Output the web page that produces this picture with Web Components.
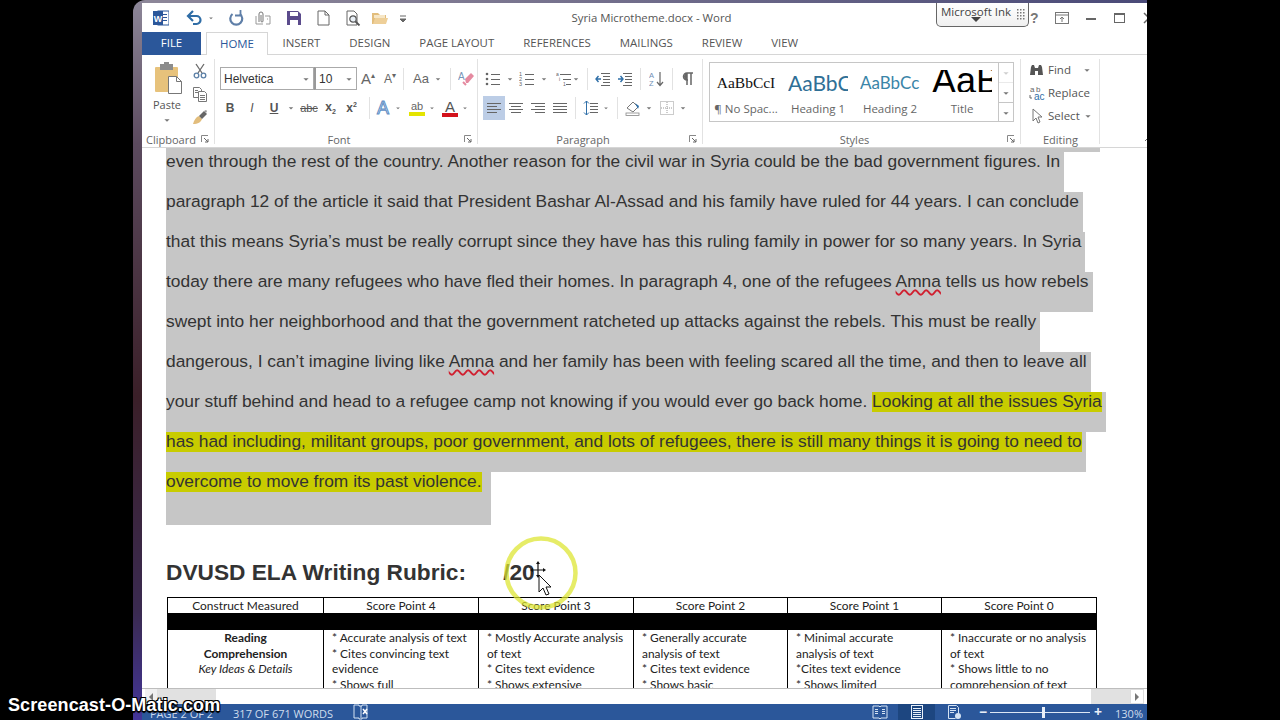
<!DOCTYPE html>
<html lang="en">
<head>
<meta charset="utf-8">
<title>Syria Microtheme.docx - Word</title>
<style>
  html, body { margin: 0; background: #000; }
</style>
</head>
<body>
<desk-screen></desk-screen>
<script>
(function () {
    "use strict";

    // Icons for the toolbar buttons, all on a 16x16 box unless the svg says otherwise.
    function svg(body, w, h) {
        w = w || 16; h = h || 16;
        return `<svg xmlns="http://www.w3.org/2000/svg" width="${w}" height="${h}" viewBox="0 0 ${w} ${h}" style="display:block">${body}</svg>`;
    }
    var BLUE = '#2f6fa8';
    function lines(rows) {
        return rows.map(function (r) { return `<path d="M${r[0]} ${r[1]+.5}H${r[2]}" stroke="${r[3] || '#666'}"/>`; }).join('');
    }
    var ICONS = {
        caret: svg('<path d="M5 7h6l-3 3z" fill="#777"/>', 16, 16),
        word: svg('<rect x="5" y="1" width="11" height="14" fill="#fff" stroke="#2b579a"/><path d="M9 4.500h5M9 7.500h5M9 10.500h5" stroke="#2b579a"/><rect x="0" y="1" width="10" height="14" fill="#2b579a"/><text x="5" y="12" font-family="Liberation Sans" font-size="9" font-weight="bold" fill="#fff" text-anchor="middle">W</text>'),
        undo: svg('<path d="M3 6h7.500a3.500 3.500 0 0 1 0 8H7" fill="none" stroke="#2f6da6" stroke-width="2.200"/><path d="M7 1L2 6l5 5" fill="none" stroke="#2f6da6" stroke-width="2.200"/>'),
        redo: svg('<path d="M4.500 4a6 6 0 1 0 7.500 0" fill="none" stroke="#5f7fa8" stroke-width="2.200"/><path d="M12.500 0v5.500H7" fill="none" stroke="#5f7fa8" stroke-width="1.800"/>'),
        touch: svg('<path d="M4 12V4a2 2 0 0 1 4 0v7a1 1 0 0 1-2 0V5" fill="none" stroke="#777"/><path d="M1 6v8h7M10 6h5v8h-4M12 9h1" fill="none" stroke="#999"/>'),
        save: svg('<path d="M1 1h11l3 3v11H1z" fill="#5b4b8c"/><rect x="4" y="2" width="8" height="4" fill="#fff"/><rect x="4" y="10" width="8" height="5" fill="#fff"/>'),
        page: svg('<path d="M3 1h7l4 4v10H3z" fill="#fff" stroke="#666"/><path d="M10 1v4h4" fill="none" stroke="#666"/>'),
        preview: svg('<path d="M2 1h7l3 3v11H2z" fill="#fff" stroke="#666"/><circle cx="8" cy="9" r="3.200" fill="#e9f0f7" stroke="#555" stroke-width="1.200"/><path d="M10.500 11.500l4 4" stroke="#555" stroke-width="1.800"/>'),
        open: svg('<path d="M0 3h6l2 2h6v9H0z" fill="#e2bd7c"/><path d="M2 5h11v3H2z" fill="#f6e6c6"/><path d="M1 14l2-6h13l-2 6z" fill="#eecf98"/>'),
        custom: svg('<path d="M5 6h6M5 9l3 3 3-3z" stroke="#666" fill="#666"/>'),
        paste: svg('<rect x="1" y="5" width="23" height="25" rx="1" fill="#e7c27b"/><rect x="6" y="2" width="13" height="6" fill="#8c8c8c"/><rect x="10" y="0" width="5" height="3" fill="#8c8c8c"/><path d="M14.500 14.500h8l5 5v12h-13z" fill="#fff" stroke="#777"/><path d="M22.500 14.500v5h5" fill="none" stroke="#777"/>', 28, 32),
        cut: svg('<path d="M4 1l6 9M12 1L6 10" stroke="#6a6a6a" stroke-width="1.300" fill="none"/><circle cx="4.500" cy="12.500" r="2.300" fill="none" stroke="#5b7fa6" stroke-width="1.300"/><circle cx="11.500" cy="12.500" r="2.300" fill="none" stroke="#5b7fa6" stroke-width="1.300"/>'),
        copy: svg('<path d="M1.500 1.500h6l2 2v8h-8z" fill="#fff" stroke="#777"/><path d="M6.500 5.500h6l2 2v8h-8z" fill="#fff" stroke="#777"/><path d="M8 9.500h5M8 11.500h5M8 13.500h5M3 4.500h3M3 6.500h3" stroke="#777"/>'),
        painter: svg('<path d="M1 15c1-4 3-7 6-8l3 3c-1 3-4 5-9 5z" fill="#e2bd7c"/><path d="M7 7l3 3 5-5-3-3z" fill="#666"/><path d="M12 2l2-1 1 1-1 2z" fill="#999"/>'),
        clear: svg('<path d="M7 8l6-6 3 3-6 7H8z" fill="#e58aa0"/><text x="0" y="9" font-family="Liberation Sans" font-size="10" fill="#7a96b8">A</text><path d="M5 11l3 3" stroke="#e58aa0" stroke-width="2"/>'),
        bullets: svg(`<g fill="#666"><circle cx="2" cy="3" r="1.300"/><circle cx="2" cy="8" r="1.300"/><circle cx="2" cy="13" r="1.300"/></g>` + lines([[6,3,15],[6,8,15],[6,13,15]])),
        numbers: svg(`<g font-family="Liberation Sans" font-size="5.500" fill="#666"><text x="0" y="5">1</text><text x="0" y="10">2</text><text x="0" y="15">3</text></g>` + lines([[6,3,15],[6,8,15],[6,13,15]])),
        multi: svg(`<g font-family="Liberation Sans" font-size="5" fill="#666"><text x="0" y="5">a</text><text x="3" y="10">i</text><text x="7" y="15">1</text></g>` + lines([[4,3,15],[7,8,15],[10,13,15]])),
        outdent: svg(lines([[6,2,15],[8,5,15],[8,8,15],[8,11,15],[6,14,15]]) + `<path d="M6 8H1M3.500 5L1 8l2.500 3" fill="none" stroke="${BLUE}" stroke-width="1.400"/>`),
        indent: svg(lines([[6,2,15],[8,5,15],[8,8,15],[8,11,15],[6,14,15]]) + `<path d="M1 8h5M3.500 5L6 8l-2.500 3" fill="none" stroke="${BLUE}" stroke-width="1.400"/>`),
        sort: svg(`<g font-family="Liberation Sans" font-size="7.500" fill="#6f8fb5"><text x="0" y="7">A</text><text x="0" y="15">Z</text></g><path d="M11 1v13M8 11l3 3.500 3-3.500" fill="none" stroke="#666" stroke-width="1.200"/>`),
        pilcrow: svg('<path d="M7 14V2M11 14V2M13 2H7a3.200 3.200 0 0 0 0 7h1" fill="none" stroke="#666" stroke-width="1.500"/><path d="M7 2.500a3 3 0 0 0 0 6z" fill="#666"/>'),
        left: svg(lines([[1,3,15],[1,6,11],[1,9,15],[1,12,11]])),
        center: svg(lines([[1,3,15],[3,6,13],[1,9,15],[3,12,13]])),
        right: svg(lines([[1,3,15],[5,6,15],[1,9,15],[5,12,15]])),
        justify: svg(lines([[1,3,15],[1,6,15],[1,9,15],[1,12,15]])),
        spacing: svg(lines([[7,3,15],[7,6,15],[7,9,15],[7,12,15]]) + `<path d="M3.500 1v14M1 3.500L3.500 1 6 3.500M1 12.500L3.500 15 6 12.500" fill="none" stroke="${BLUE}"/>`),
        shading: svg(`<path d="M2 8l6-6 5 5-5 5z" fill="#fff" stroke="#777"/><path d="M10 3l4 3-1 3z" fill="${BLUE}"/><rect x="1" y="13" width="13" height="2.500" fill="#fff" stroke="#888" stroke-width=".8"/>`),
        borders: svg('<rect x="1.500" y="1.500" width="13" height="13" fill="none" stroke="#999" stroke-dasharray="1 1"/><path d="M8 2v12M2 8h12" stroke="#999" stroke-dasharray="1 1"/>'),
        launcher: svg('<path d="M1.500 8V1.500H8" fill="none" stroke="#888"/><path d="M4 4l4 4M8 5v3H5" fill="none" stroke="#666"/>', 10, 10),
        binoc: svg('<path d="M1 13l1-8 1-2h2l1 3v7zM9 13V6l1-3h2l1 2 1 8z" fill="#555"/><rect x="6" y="6" width="3" height="3" fill="#555"/>'),
        replace: svg(`<text x="1" y="7" font-family="Liberation Sans" font-size="8" fill="#666">a</text><text x="7" y="7" font-family="Liberation Sans" font-size="8" fill="#666">b</text><text x="5" y="15" font-family="Liberation Sans" font-size="10" fill="${BLUE}">ac</text><path d="M1 10v3h2" fill="none" stroke="#666"/>`),
        select: svg('<path d="M4 1v12l3-3 2 5 2-1-2-5h4z" fill="#fff" stroke="#777"/>'),
        ribbonopts: svg('<rect x="1.500" y="2.500" width="13" height="11" fill="none" stroke="#777"/><path d="M2 5h12" stroke="#777"/><path d="M8 12V7M6 9l2-2 2 2" fill="none" stroke="#777"/>'),
        min: svg('<path d="M3 9h10" stroke="#666" stroke-width="2"/>'),
        max: svg('<rect x="2.500" y="3.500" width="10" height="9" fill="none" stroke="#666"/><path d="M2 4h11" stroke="#666" stroke-width="2"/>'),
        close: svg('<path d="M3 3l10 10M13 3L3 13" stroke="#666" stroke-width="1.500"/>'),
        collapse: svg('<path d="M1 6l4-4 4 4" fill="none" stroke="#666"/>', 10, 8),
        grip: svg('<g fill="#777"><path d="M0 0h1.500v1.500H0zM3 0h1.500v1.500H3zM6 0h1.500v1.500H6zM0 3h1.500v1.500H0zM3 3h1.500v1.500H3zM6 3h1.500v1.500H6zM0 6h1.500v1.500H0zM3 6h1.500v1.500H3zM6 6h1.500v1.500H6zM0 9h1.500v1.500H0zM3 9h1.500v1.500H3zM6 9h1.500v1.500H6z"/></g>', 8, 11),
        proof: svg('<path d="M1 1h5v1H9V1h5v13H9v1H6v-1H1z" fill="none" stroke="#d5e3f3"/><path d="M8 2v12" stroke="#d5e3f3"/><path d="M10 5l4 5M14 5l-4 5" stroke="#fff" stroke-width="1.500"/>'),
        readmode: svg('<path d="M1 2h6l1 1 1-1h6v12H9l-1 1-1-1H1z" fill="none" stroke="#d5e3f3"/>' + lines([[3,5,6,'#d5e3f3'],[3,7,6,'#d5e3f3'],[3,9,6,'#d5e3f3'],[10,5,13,'#d5e3f3'],[10,7,13,'#d5e3f3'],[10,9,13,'#d5e3f3']])),
        printmode: svg('<rect x="2.500" y="1.500" width="11" height="13" fill="none" stroke="#eaf1f9"/>' + lines([[4,4,12,'#eaf1f9'],[4,6,12,'#eaf1f9'],[4,8,12,'#eaf1f9'],[4,10,12,'#eaf1f9'],[4,12,12,'#eaf1f9']])),
        webmode: svg('<path d="M2.500 1.500h8l2 2v6M2.500 1.500v13h7" fill="none" stroke="#d5e3f3"/>' + lines([[4,4,10,'#d5e3f3'],[4,6,10,'#d5e3f3'],[4,8,8,'#d5e3f3']]) + '<circle cx="12" cy="12" r="3" fill="#d5e3f3"/>')
    };

    function shadow(el, html) {
        if (!el.shadowRoot) {
            el.attachShadow({ mode: 'open' });
        }
        el.shadowRoot.innerHTML = html;
    }

    // One toolbar button. w is the slot width in the row, icon picks from ICONS,
    // text buttons (B, I, U...) pass their label through the slot.
    class ToolBtn extends HTMLElement {
        connectedCallback() {
            var w = this.getAttribute('w') || 22;
            var icon = ICONS[this.getAttribute('icon')] || '<slot></slot>';
            shadow(this, `<style>
                :host { display: flex; flex: 0 0 auto; align-items: center; justify-content: center;
                    width: ${w}px; height: 24px; color: #555; font: 12px "Liberation Sans", sans-serif; }
                :host([active]) { background: #bccde6; }
            </style>${icon}`);
        }
    }
    customElements.define('tool-btn', ToolBtn);

    class TitleBar extends HTMLElement {
        connectedCallback() {
            shadow(this, `<style>
                :host { display: flex; align-items: center; height: 29px; background: #fff; color: #555;
                    font: 11.400px "Open Sans", sans-serif; }
                .qat { display: flex; align-items: center; width: 429px; box-sizing: border-box; padding-left: 9px; flex: none; }
                .title { flex: none; width: 161px; text-align: center; white-space: nowrap; color: #555; }
                .win { margin-left: auto; display: flex; align-items: center; }
                .help { font: bold 14px "Liberation Sans", sans-serif; color: #777; width: 14px; }
            </style>
            <div class="qat">
                <tool-btn icon="word" w="20"></tool-btn>
                <tool-btn icon="undo" w="24" style="margin-left:11px"></tool-btn>
                <tool-btn icon="caret" w="10"></tool-btn>
                <tool-btn icon="redo" w="22" style="margin-left:9px"></tool-btn>
                <tool-btn icon="touch" w="24" style="margin-left:4px"></tool-btn>
                <tool-btn icon="save" w="22" style="margin-left:8px"></tool-btn>
                <tool-btn icon="page" w="22" style="margin-left:7px"></tool-btn>
                <tool-btn icon="preview" w="22" style="margin-left:8px"></tool-btn>
                <tool-btn icon="open" w="22" style="margin-left:5px"></tool-btn>
                <tool-btn icon="custom" w="16" style="margin-left:4px"></tool-btn>
            </div>
            <div class="title">Syria Microtheme.docx - Word</div>
            <div class="win">
                <span class="help">?</span>
                <tool-btn icon="ribbonopts" w="24" style="margin-left:6px"></tool-btn>
                <tool-btn icon="min" w="24" style="margin-left:5px"></tool-btn>
                <tool-btn icon="max" w="24" style="margin-left:5px"></tool-btn>
                <tool-btn icon="close" w="24" style="margin:0 -14px 0 5px"></tool-btn>
            </div>`);
        }
    }
    customElements.define('title-bar', TitleBar);

    class TabStrip extends HTMLElement {
        connectedCallback() {
            var tabs = ['INSERT', 'DESIGN', 'PAGE LAYOUT', 'REFERENCES', 'MAILINGS', 'REVIEW', 'VIEW'];
            shadow(this, `<style>
                :host { display: flex; height: 23px; box-sizing: border-box; border-bottom: 1px solid #d6d6d6;
                    background: #fff; color: #555; font: 11.450px/22px "Open Sans", sans-serif; }
                .file { width: 59px; height: 23px; background: #2b579a; color: #fff; text-align: center; }
                .home { box-sizing: border-box; width: 62px; height: 23px; margin-left: 5px; text-align: center;
                    border: 1px solid #d6d6d6; border-bottom: 0; background: #fff; color: #2b579a; }
                .tab { padding: 0 14.500px; }
                .tabs { display: flex; }
            </style>
            <div class="file">FILE</div><div class="home">HOME</div>
            <div class="tabs">${tabs.map(function (t) { return `<div class="tab">${t}</div>`; }).join('')}</div>`);
        }
    }
    customElements.define('tab-strip', TabStrip);

    // A ribbon group: its tools in the slot, label at the bottom, optional launcher.
    class RibbonGroup extends HTMLElement {
        connectedCallback() {
            var launcher = this.hasAttribute('launcher') ? `<span class="launch">${ICONS.launcher}</span>` : '';
            shadow(this, `<style>
                :host { display: flex; flex-direction: column; flex: none; box-sizing: border-box; height: 92px;
                    position: relative; }
                .body { flex: 1; min-height: 0; }
                .foot { display: flex; align-items: center; height: 16px; color: #666;
                    font: 11px "Open Sans", sans-serif; }
                .name { flex: 1; text-align: center; }
                .launch { flex: none; width: 15px; }
                .sep { position: absolute; right: 0; top: 4px; bottom: 3px; width: 1px; background: #e2e2e2; }
            </style>
            <div class="body"><slot></slot></div>
            <div class="foot"><span class="name">${this.getAttribute('label')}</span>${launcher}</div>
            <div class="sep"></div>`);
        }
    }
    customElements.define('ribbon-group', RibbonGroup);

    class WordRibbon extends HTMLElement {
        connectedCallback() {
            shadow(this, `<style>
                :host { display: flex; height: 93px; box-sizing: border-box; background: #fff; border-bottom: 1px solid #d6d6d6;
                    font: 11px "Open Sans", sans-serif; color: #555; position: relative; }
                .row { display: flex; align-items: center; height: 24px; }
                .sep { flex: none; width: 1px; height: 22px; background: #e2e2e2; }
                .clip { display: flex; height: 76px; }
                .paste { width: 50px; display: flex; flex-direction: column; align-items: center; padding: 7px 0 0 0; }
                .paste span { margin-top: 3px; font-size: 11px; line-height: 16px; }
                .paste tool-btn { height: 14px; }
                .small { display: flex; flex-direction: column; padding-top: 4px; }
                .small tool-btn { height: 23px; }
                .combo { display: flex; align-items: center; box-sizing: border-box; height: 23px; border: 1px solid #aaa;
                    font: 12px "Liberation Sans", sans-serif; color: #333; padding-left: 3px; }
                .combo tool-btn { margin-left: auto; width: 14px; }
                .rows { display: flex; flex-direction: column; padding-top: 12px; gap: 6px; }
                b, i, u, s { font-family: "Liberation Sans", sans-serif; }
                .fa { font-size: 15px; color: #666; }
                .fa2 { font-size: 12px; color: #666; }
                .ao { font: 18px "Liberation Sans", sans-serif; color: #dbe8f6; -webkit-text-stroke: 1px #5f8fc5; }
                .sub { font-size: 7px; vertical-align: sub; }
                .sup { font-size: 7px; vertical-align: super; }
                .hl { display: flex; flex-direction: column; align-items: center; font: 11px/11px "Liberation Sans", sans-serif; color: #666; }
                .hl::after { content: ""; width: 16px; height: 4px; background: #e4e400; }
                .fc { display: flex; flex-direction: column; align-items: center; font: 15px/13px "Liberation Sans", sans-serif; color: #555; }
                .fc::after { content: ""; width: 16px; height: 4px; background: #d3121c; }
                .gallery { display: flex; box-sizing: border-box; width: 305px; height: 60px; margin: 7px 0 0 6px; border: 1px solid #c6c6c6; }
                .style { flex: none; width: 72px; height: 58px; overflow: hidden; display: flex; flex-direction: column; align-items: center; white-space: nowrap; }
                .style .sample { height: 40px; line-height: 40px; width: 60px; overflow: hidden; text-align: center; }
                .style .label { font-size: 11.500px; line-height: 16px; margin-top: -2px; color: #666; }
                .style .big { box-sizing: border-box; height: 22px; margin: 7px 0 11px; line-height: 22px; font: 36px/22px "Liberation Sans", sans-serif;
                    color: #000; text-align: left; }
                .scroll { margin-left: auto; width: 14px; display: flex; flex-direction: column; border-left: 1px solid #c6c6c6; }
                .scroll tool-btn { width: 14px; height: 20px; border-bottom: 1px solid #c6c6c6; box-sizing: border-box; }
                .scroll tool-btn:last-child { border-bottom: 0; }
                .edit { display: flex; flex-direction: column; padding: 3px 0 0 8px; }
                .edit .row { height: 23px; font-size: 11.500px; gap: 3px; }
                .edit tool-btn { width: 16px; }
                .edit tool-btn.c { width: 14px; }
                .collapse { margin-left: auto; align-self: flex-end; margin-bottom: 4px; margin-right: -7px; }
            </style>
            <ribbon-group label="Clipboard" launcher style="width:73px">
                <div class="clip">
                    <div class="paste">
                        <tool-btn icon="paste" w="28" style="height:32px;margin-left:1px"></tool-btn>
                        <span>Paste</span>
                        <tool-btn icon="caret" w="14"></tool-btn>
                    </div>
                    <div class="small">
                        <tool-btn icon="cut" w="16"></tool-btn>
                        <tool-btn icon="copy" w="16"></tool-btn>
                        <tool-btn icon="painter" w="16"></tool-btn>
                    </div>
                </div>
            </ribbon-group>

            <ribbon-group label="Font" launcher style="width:263px">
                <div class="rows">
                    <div class="row" style="padding-left:5px;height:23px">
                        <div class="combo" style="width:94px">Helvetica<tool-btn icon="caret"></tool-btn></div>
                        <div class="combo" style="width:43px;border-left:2px solid #999">10<tool-btn icon="caret"></tool-btn></div>
                        <tool-btn w="22"><span class="fa">A<span style="font-size:8px;vertical-align:super">▴</span></span></tool-btn>
                        <tool-btn w="22"><span class="fa2">A<span style="font-size:8px;vertical-align:super">▾</span></span></tool-btn>
                        <span class="sep" style="margin-left:2px"></span>
                        <tool-btn w="22" style="margin-left:6px"><span class="fa2" style="font-size:13px">Aa</span></tool-btn>
                        <tool-btn icon="caret" w="12"></tool-btn>
                        <span class="sep" style="margin-left:6px"></span>
                        <tool-btn icon="clear" w="22" style="margin-left:4px"></tool-btn>
                    </div>
                    <div class="row" style="padding-left:4px">
                        <tool-btn w="22"><b>B</b></tool-btn>
                        <tool-btn w="22"><i>I</i></tool-btn>
                        <tool-btn w="22"><u style="font-weight:bold">U</u></tool-btn>
                        <tool-btn icon="caret" w="12"></tool-btn>
                        <tool-btn w="22" style="margin-left:1px"><s style="font-size:11px">abc</s></tool-btn>
                        <tool-btn w="21"><b>x<span class="sub">2</span></b></tool-btn>
                        <tool-btn w="21"><b>x<span class="sup">2</span></b></tool-btn>
                        <span class="sep" style="margin-left:7px"></span>
                        <tool-btn w="20" style="margin-left:3px"><span class="ao">A</span></tool-btn>
                        <tool-btn icon="caret" w="10"></tool-btn>
                        <tool-btn w="20" style="margin-left:4px"><span class="hl">ab</span></tool-btn>
                        <tool-btn icon="caret" w="10"></tool-btn>
                        <tool-btn w="20" style="margin-left:3px"><span class="fc">A</span></tool-btn>
                        <tool-btn icon="caret" w="10"></tool-btn>
                    </div>
                </div>
            </ribbon-group>

            <ribbon-group label="Paragraph" launcher style="width:225px">
                <div class="rows">
                    <div class="row" style="padding-left:4px;height:23px">
                        <tool-btn icon="bullets" w="22"></tool-btn>
                        <tool-btn icon="caret" w="12"></tool-btn>
                        <tool-btn icon="numbers" w="22"></tool-btn>
                        <tool-btn icon="caret" w="12"></tool-btn>
                        <tool-btn icon="multi" w="22" style="margin-left:3px"></tool-btn>
                        <tool-btn icon="caret" w="12" style="margin-left:-5px"></tool-btn>
                        <span class="sep" style="margin-left:5px"></span>
                        <tool-btn icon="outdent" w="22" style="margin-left:4px"></tool-btn>
                        <tool-btn icon="indent" w="22"></tool-btn>
                        <span class="sep" style="margin-left:4px"></span>
                        <tool-btn icon="sort" w="22" style="margin-left:5px"></tool-btn>
                        <span class="sep" style="margin-left:4px"></span>
                        <tool-btn icon="pilcrow" w="22" style="margin-left:4px"></tool-btn>
                    </div>
                    <div class="row" style="padding-left:5px">
                        <tool-btn icon="left" w="22" active></tool-btn>
                        <tool-btn icon="center" w="22"></tool-btn>
                        <tool-btn icon="right" w="22"></tool-btn>
                        <tool-btn icon="justify" w="22"></tool-btn>
                        <span class="sep" style="margin-left:4px"></span>
                        <tool-btn icon="spacing" w="20" style="margin-left:5px"></tool-btn>
                        <tool-btn icon="caret" w="10"></tool-btn>
                        <span class="sep" style="margin-left:6px"></span>
                        <tool-btn icon="shading" w="20" style="margin-left:5px"></tool-btn>
                        <tool-btn icon="caret" w="12"></tool-btn>
                        <tool-btn icon="borders" w="20" style="margin-left:2px"></tool-btn>
                        <tool-btn icon="caret" w="12"></tool-btn>
                    </div>
                </div>
            </ribbon-group>

            <ribbon-group label="Styles" launcher style="width:318px">
                <div class="gallery">
                    <div class="style"><div class="sample" style="font-family:'Liberation Serif',serif;font-size:15.500px;color:#111">AaBbCcI</div><span class="label">¶ No Spac...</span></div>
                    <div class="style"><div class="sample" style="font-family:'Lato',sans-serif;font-size:21px;color:#2f6f96;text-align:left">AaBbCc</div><span class="label">Heading 1</span></div>
                    <div class="style"><div class="sample" style="font-family:'Lato',sans-serif;font-size:17px;color:#3a85a8;text-align:left">AaBbCc</div><span class="label">Heading 2</span></div>
                    <div class="style"><div class="sample big">AaB</div><span class="label">Title</span></div>
                    <div class="scroll">
                        <tool-btn icon="caret" style="opacity:.35"></tool-btn>
                        <tool-btn icon="caret"></tool-btn>
                        <tool-btn icon="caret"></tool-btn>
                    </div>
                </div>
            </ribbon-group>

            <ribbon-group label="Editing" style="width:79px">
                <div class="edit">
                    <div class="row"><tool-btn icon="binoc"></tool-btn>Find<tool-btn class="c" icon="caret" style="margin-left:6px"></tool-btn></div>
                    <div class="row"><tool-btn icon="replace"></tool-btn>Replace</div>
                    <div class="row"><tool-btn icon="select"></tool-btn>Select<tool-btn class="c" icon="caret" style="margin-left:-2px"></tool-btn></div>
                </div>
            </ribbon-group>
            <span class="collapse">${ICONS.collapse}</span>`);
        }
    }
    customElements.define('word-ribbon', WordRibbon);

    // The rubric table at the bottom of the page, cut off by the scroll bar.
    class RubricTable extends HTMLElement {
        connectedCallback() {
            var heads = ['Construct Measured', 'Score Point 4', 'Score Point 3', 'Score Point 2', 'Score Point 1', 'Score Point 0'];
            var widths = [156, 155, 155, 154, 154, 155];
            var cells = [
                '* Accurate analysis of text<br>* Cites convincing text<br>evidence<br>* Shows full',
                '* Mostly Accurate analysis<br>of text<br>* Cites text evidence<br>* Shows extensive',
                '* Generally accurate<br>analysis of text<br>* Cites text evidence<br>* Shows basic',
                '* Minimal accurate<br>analysis of text<br>*Cites text evidence<br>* Shows limited',
                '* Inaccurate or no analysis<br>of text<br>* Shows little to no<br>comprehension of text'
            ];
            shadow(this, `<style>
                :host { display: block; width: 929px; margin-left: 1px; color: #222;
                    font: 11.900px/15.700px "Lato", sans-serif; }
                table { border-collapse: collapse; table-layout: fixed; width: 100%; }
                td { border: 1px solid #000; padding: 0 4px; vertical-align: top; }
                .h td { text-align: center; height: 15px; line-height: 15px; }
                .k td { background: #000; height: 15px; padding: 0; }
                .c td { padding-left: 8px; padding-right: 2px; }
                .c td:first-child { text-align: center; padding-left: 2px; }
            </style>
            <table>
                <colgroup>${widths.map(function (w) { return `<col style="width:${w}px">`; }).join('')}</colgroup>
                <tr class="h">${heads.map(function (h) { return `<td>${h}</td>`; }).join('')}</tr>
                <tr class="k"><td colspan="6"></td></tr>
                <tr class="c"><td><b>Reading<br>Comprehension</b><br><i>Key Ideas &amp; Details</i></td>${cells.map(function (c) { return `<td>${c}</td>`; }).join('')}</tr>
            </table>`);
        }
    }
    customElements.define('rubric-table', RubricTable);

    class DocPage extends HTMLElement {
        connectedCallback() {
            shadow(this, `<style>
                :host { display: block; flex: 1; min-height: 0; overflow: hidden; background: #fff; padding-left: 24px;
                    color: #333; font: 17.380px/18px "Liberation Sans", sans-serif; }
                .top { height: 4px; width: 934px; background: #c6c6c6; }
                .ln { display: block; width: fit-content; height: 40px; padding-right: 4px; background: #c6c6c6; white-space: nowrap; }
                .ln.last { height: 53px; padding-right: 9px; }
                mark { background: #c8cc00; color: #333; display: inline-block; padding-bottom: 2px; }
                .sp { text-decoration: underline wavy #d02030 1.500px; text-underline-offset: 2px; }
                h2 { margin: 34px 0 0; font: bold 22.700px/26px "Liberation Sans", sans-serif; color: #333; white-space: pre; height: 26px; }
                rubric-table { margin-top: 12px; }
            </style>
            <div class="top"></div>
            <span class="ln">even through the rest of the country. Another reason for the civil war in Syria could be the bad government figures. In</span>
            <span class="ln">paragraph 12 of the article it said that President Bashar Al-Assad and his family have ruled for 44 years. I can conclude</span>
            <span class="ln">that this means Syria’s must be really corrupt since they have has this ruling family in power for so many years. In Syria</span>
            <span class="ln">today there are many refugees who have fled their homes. In paragraph 4, one of the refugees <span class="sp">Amna</span> tells us how rebels</span>
            <span class="ln">swept into her neighborhood and that the government ratcheted up attacks against the rebels. This must be really</span>
            <span class="ln">dangerous, I can’t imagine living like <span class="sp">Amna</span> and her family has been with feeling scared all the time, and then to leave all</span>
            <span class="ln">your stuff behind and head to a refugee camp not knowing if you would ever go back home. <mark>Looking at all the issues Syria</mark></span>
            <span class="ln"><mark>has had including, militant groups, poor government, and lots of refugees, there is still many things it is going to need to</mark></span>
            <span class="ln last"><mark>overcome to move from its past violence.</mark></span>
            <h2>DVUSD ELA Writing Rubric:    <span style="margin-left:12px">/20</span></h2>
            <rubric-table></rubric-table>`);
        }
    }
    customElements.define('doc-page', DocPage);

    class HScroll extends HTMLElement {
        connectedCallback() {
            shadow(this, `<style>
                :host { display: flex; align-items: stretch; height: 16px; box-sizing: border-box; background: #fff;
                    border-top: 1px solid #bdbdbd; padding: 0 3px; }
                .arrow { width: 12px; display: flex; align-items: center; justify-content: center; background: #f0f0f0; }
                .thumb { width: 59px; background: #e1e1e1; }
                .track { flex: 1; }
                .end { width: 39px; background: #e1e1e1; }
                .tri { width: 0; height: 0; border: 4px solid transparent; }
            </style>
            <div class="arrow"><span class="tri" style="border-right-color:#777;border-left-width:0"></span></div>
            <div class="thumb"></div><div class="track"></div><div class="end"></div>
            <div class="arrow" style="background:#fff;border:1px solid #ddd"><span class="tri" style="border-left-color:#777;border-right-width:0"></span></div>`);
        }
    }
    customElements.define('h-scroll', HScroll);

    class StatusBar extends HTMLElement {
        connectedCallback() {
            shadow(this, `<style>
                :host { display: flex; align-items: center; height: 16px; background: #2b579a; color: #cfdded;
                    font: 11px/14px "Open Sans", sans-serif; padding-left: 8px; overflow: hidden; }
                .tx { margin-top: 4px; }
                .gap { margin-left: 20px; }
                .right { margin-left: auto; display: flex; align-items: center; padding-right: 4px; }
                .v { flex: none; width: 37px; height: 16px; display: flex; align-items: center; justify-content: center; }
                .v.on { background: #1d4680; }
                .slider { display: flex; align-items: center; position: relative; width: 100px; height: 16px; margin: 0 3px 0 2px; }
                .slider::before { content: ""; flex: 1; height: 1px; background: #dce7f4; }
                .thumb { position: absolute; left: 52px; top: 3px; width: 3px; height: 11px; background: #e8eff8; }
                .pm { width: 10px; text-align: center; font-weight: bold; font-size: 14px; color: #e8eff8; line-height: 16px; }
                .pct { margin-left: 12px; }
            </style>
            <span class="tx">PAGE 2 OF 2</span><span class="tx gap">317 OF 671 WORDS</span>
            <span class="gap" style="display:flex">${ICONS.proof}</span>
            <div class="right">
                <span class="v">${ICONS.readmode}</span>
                <span class="v on">${ICONS.printmode}</span>
                <span class="v">${ICONS.webmode}</span>
                <span class="pm" style="margin-left:6px">−</span>
                <span class="slider"><span class="thumb"></span></span>
                <span class="pm">+</span>
                <span class="tx pct">130%</span>
            </div>`);
        }
    }
    customElements.define('status-bar', StatusBar);

    // The floating Ink toolbar sits over the title bar, so it is absolutely placed.
    class InkBar extends HTMLElement {
        connectedCallback() {
            shadow(this, `<style>
                :host { position: absolute; left: 794px; top: 0; width: 93px; height: 24px; box-sizing: border-box;
                    border: 1px solid #666; border-top: 0; border-radius: 0 0 5px 5px;
                    background: linear-gradient(#fff, #f0f0f0); color: #444; font: 11.500px/17px "Open Sans", sans-serif;
                    padding-left: 4px; white-space: nowrap; }
                .tri { position: absolute; left: 34px; top: 14px; width: 0; height: 0; border: 5px solid transparent;
                    border-top: 5px solid #444; border-bottom: 0; }
                .grip { position: absolute; right: 3px; top: 6px; }
            </style>Microsoft Ink<span class="tri"></span><span class="grip">${ICONS.grip}</span>`);
        }
    }
    customElements.define('ink-bar', InkBar);

    class WordWindow extends HTMLElement {
        connectedCallback() {
            shadow(this, `<style>
                :host { display: flex; flex-direction: column; width: 1005px; height: 717px; background: #fff; position: relative; overflow: hidden; }
            </style>
            <title-bar></title-bar>
            <tab-strip></tab-strip>
            <word-ribbon></word-ribbon>
            <doc-page></doc-page>
            <h-scroll></h-scroll>
            <status-bar></status-bar>
            <ink-bar></ink-bar>`);
        }
    }
    customElements.define('word-window', WordWindow);

    // Screen recording: the mouse halo with its cursors, drawn over the window.
    class MouseHalo extends HTMLElement {
        connectedCallback() {
            shadow(this, `<style>
                :host { position: absolute; left: 500px; top: 532px; width: 84px; height: 84px; }
            </style>
            <svg xmlns="http://www.w3.org/2000/svg" width="84" height="84" viewBox="0 0 84 84" style="display:block">
                <circle cx="41" cy="41" r="34.500" fill="none" stroke="#dde52c" stroke-opacity=".72" stroke-width="4.500"/>
                <path d="M38 32v12M33 38h10" stroke="#111" stroke-width="1.200"/>
                <path d="M38 29l-2 3h4zM38 46l-2-3h4zM30 38l3-2v4zM46 38l-3-2v4z" fill="#111"/>
                <path d="M39 43v17l4-4 3 7 3-1-3-7h5z" fill="#fff" stroke="#111"/>
            </svg>`);
        }
    }
    customElements.define('mouse-halo', MouseHalo);

    class DeskScreen extends HTMLElement {
        connectedCallback() {
            shadow(this, `<style>
                :host { display: block; position: relative; width: 1280px; height: 720px; background: #000; overflow: hidden; }
                .frame { width: 1014px; height: 720px; margin-left: 133px; box-sizing: border-box; padding: 3px 0 0 9px;
                    border-top-left-radius: 12px;
                    background: linear-gradient(90deg, #8d8799 0, #7f7a92 30%, #4a4a78 100%) top / 100% 3px no-repeat,
                        linear-gradient(180deg, #8d8799 0, #5b4a5e 20%, #3a1f28 55%, #3a2a50 85%, #43359a 100%); }
                .wm { position: absolute; left: 8px; top: 695px; color: #fff; white-space: nowrap;
                    font: bold 18px/20px "Liberation Sans", sans-serif; letter-spacing: .1px;
                    text-shadow: 1px 1px 0 #000, -1px -1px 0 #000, 1px -1px 0 #000, -1px 1px 0 #000, 0 2px 1px #000; }
            </style>
            <div class="frame"><word-window></word-window></div>
            <mouse-halo></mouse-halo>
            <div class="wm">Screencast-O-Matic.com</div>`);
        }
    }
    customElements.define('desk-screen', DeskScreen);
})();
</script>
</body>
</html>
